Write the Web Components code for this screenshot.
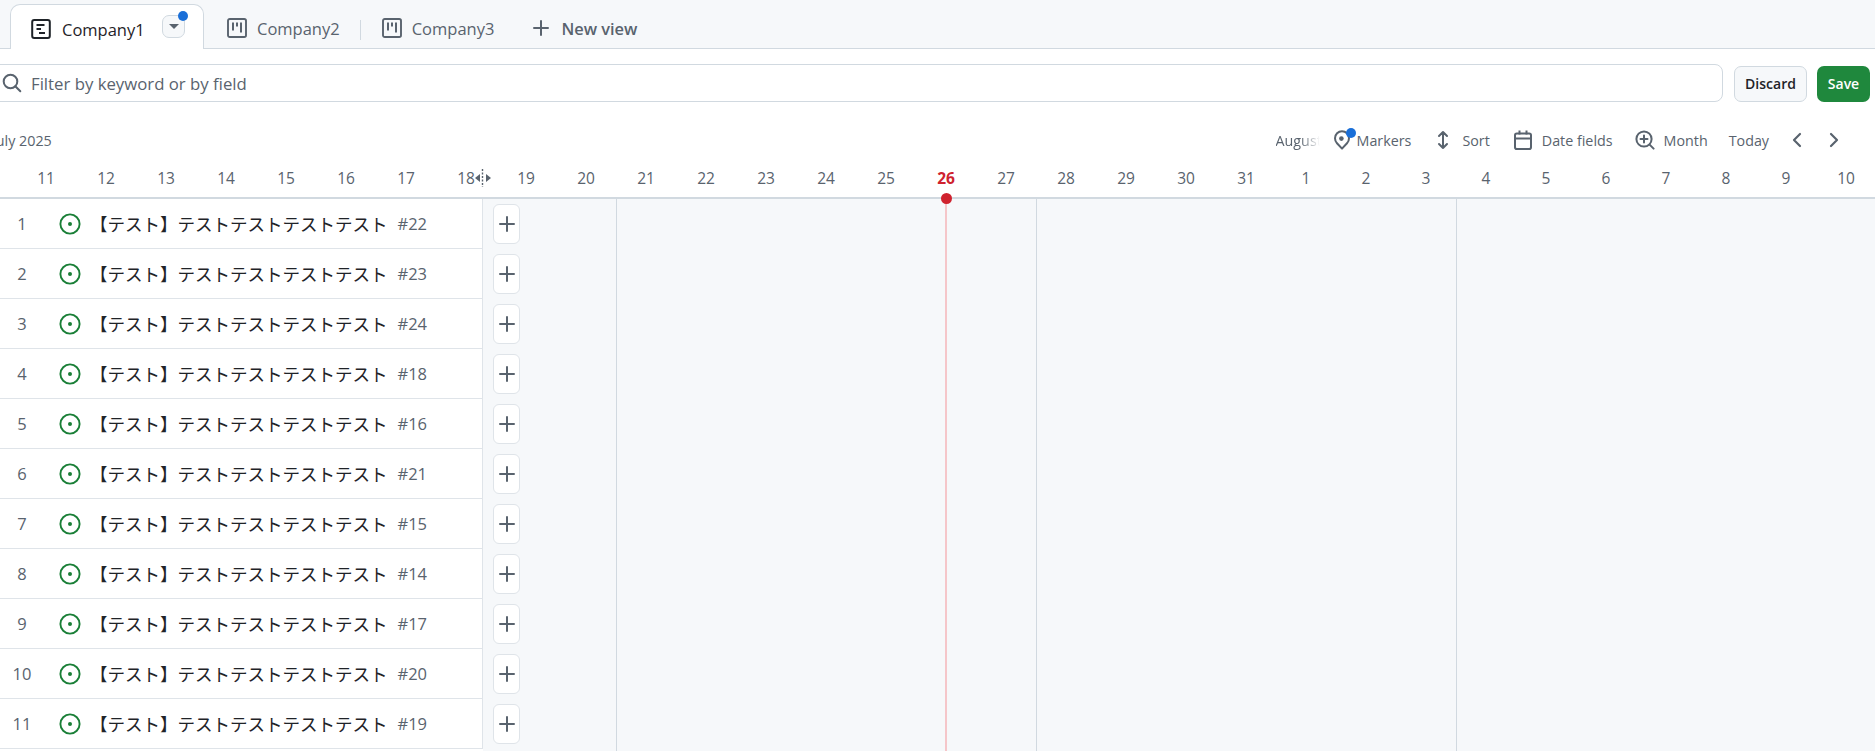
<!DOCTYPE html>
<html>
<head>
<meta charset="utf-8">
<style>
  html, body { margin: 0; height: 751px; overflow: hidden; background: #fff; }
  body { font-family: "Open Sans", "Noto Sans CJK JP", sans-serif; color: #1f2328; }
</style>
</head>
<body>
<view-tabs>
  <view-tab active icon="table" dropdown>Company1</view-tab>
  <view-tab icon="board">Company2</view-tab>
  <tab-sep></tab-sep>
  <view-tab icon="board">Company3</view-tab>
  <new-view>New view</new-view>
</view-tabs>
<filter-bar></filter-bar>
<roadmap-toolbar></roadmap-toolbar>
<date-row></date-row>
<roadmap-body id="body"></roadmap-body>

<script>
const ICONS = {
  table: '<rect x="1.2" y="1" width="17.6" height="18" rx="2" fill="none" stroke="currentColor" stroke-width="2"/><path d="M5.5 6h8M5.5 10h4.5M8 14h6" stroke="currentColor" stroke-width="2" fill="none"/>',
  board: '<rect x="1" y="1" width="18" height="18" rx="1.8" fill="none" stroke="currentColor" stroke-width="1.9"/><path d="M6 4.5v8M10 4.5v4M14 4.5v10" stroke="currentColor" stroke-width="2" fill="none"/>',
  plus: '<path d="M10 3v14M3 10h14" stroke="currentColor" stroke-width="2" fill="none" stroke-linecap="round"/>',
  search: '<circle cx="8.5" cy="8.5" r="6.8" fill="none" stroke="currentColor" stroke-width="2"/><path d="M13.3 13.3l5 5" stroke="currentColor" stroke-width="2" stroke-linecap="round"/>',
  marker: '<path d="M10 18.6l-5-5.4a7 7 0 1 1 10 0z" fill="none" stroke="currentColor" stroke-width="2" stroke-linejoin="round"/><circle cx="9.4" cy="8.6" r="2.3" fill="currentColor"/>',
  sort: '<path d="M10 2v16M6 6l4-4 4 4M6 14l4 4 4-4" fill="none" stroke="currentColor" stroke-width="2" stroke-linecap="round" stroke-linejoin="round"/>',
  calendar: '<rect x="2" y="3.5" width="16" height="15.5" rx="1.8" fill="none" stroke="currentColor" stroke-width="2"/><path d="M2 8.5h16M6.5 0.5v4M13.5 0.5v4" stroke="currentColor" stroke-width="2" fill="none"/>',
  zoom: '<circle cx="9" cy="9" r="7.6" fill="none" stroke="currentColor" stroke-width="2"/><path d="M14.6 14.6l4 4M9 5.5v7M5.5 9h7" stroke="currentColor" stroke-width="2" stroke-linecap="round" fill="none"/>',
  left: '<path d="M13 4l-6 6 6 6" fill="none" stroke="currentColor" stroke-width="2.2" stroke-linecap="round" stroke-linejoin="round"/>',
  right: '<path d="M7 4l6 6-6 6" fill="none" stroke="currentColor" stroke-width="2.2" stroke-linecap="round" stroke-linejoin="round"/>'
};
const svg = (name, size = 20) =>
  `<svg width="${size}" height="${size}" viewBox="0 0 20 20" style="display:block;flex:none">${ICONS[name]}</svg>`;

class ViewTabs extends HTMLElement {
  constructor() {
    super();
    this.attachShadow({ mode: 'open' }).innerHTML = `
      <style>
        :host {
          display: flex;
          align-items: flex-end;
          height: 48px;
          padding-left: 10px;
          background: #f6f8fa;
          border-bottom: 1px solid #d1d9e0;
        }
      </style>
      <slot></slot>`;
  }
}

class ViewTab extends HTMLElement {
  constructor() {
    super();
    this.attachShadow({ mode: 'open' });
  }
  connectedCallback() {
    const active = this.hasAttribute('active');
    this.shadowRoot.innerHTML = `
      <style>
        :host {
          display: flex;
          align-items: center;
          box-sizing: border-box;
          height: ${active ? 45 : 44}px;
          margin-bottom: ${active ? -1 : 0}px;
          padding: ${active ? '4px 0 0 20px' : '4px 20px 0 23px'};
          color: ${active ? '#1f2328' : '#59636e'};
          font-size: 16.5px;
          background: ${active ? '#fff' : 'transparent'};
          ${active ? 'border: 1px solid #d1d9e0; border-bottom: 0; border-radius: 10px 10px 0 0; width: 194px;' : ''}
        }
        .label { margin-left: ${active ? 11 : 10}px; }
        .drop {
          position: relative;
          box-sizing: border-box;
          width: 23px; height: 23px;
          margin: 0 0 6px 17px;
          border: 1px solid #d1d9e0;
          border-radius: 7px;
          background: #f6f8fa;
        }
        .drop::before {
          content: "";
          position: absolute;
          left: 6px; top: 8px;
          border: 5px solid transparent;
          border-top: 5px solid #59636e;
          border-bottom: 0;
        }
        .dot {
          position: absolute;
          right: -4px; top: -5px;
          width: 10px; height: 10px;
          border-radius: 50%;
          background: #1a6fd8;
        }
      </style>
      ${svg(this.getAttribute('icon'))}
      <span class="label"><slot></slot></span>
      ${this.hasAttribute('dropdown') ? '<span class="drop"><span class="dot"></span></span>' : ''}`;
  }
}

class TabSep extends HTMLElement {
  constructor() {
    super();
    this.attachShadow({ mode: 'open' }).innerHTML = `
      <style>
        :host {
          display: block;
          width: 1px;
          height: 20px;
          margin: 0 -2px 8px 0;
          background: #d1d9e0;
        }
      </style>`;
  }
}

class NewView extends HTMLElement {
  constructor() {
    super();
    this.attachShadow({ mode: 'open' }).innerHTML = `
      <style>
        :host {
          display: flex;
          align-items: center;
          gap: 10px;
          box-sizing: border-box;
          height: 44px;
          padding-top: 4px;
          margin-left: 17px;
          color: #59636e;
          font-size: 16.4px;
          font-weight: 600;
        }
      </style>
      ${svg('plus')}<span><slot></slot></span>`;
  }
}

class FilterBar extends HTMLElement {
  constructor() {
    super();
    this.attachShadow({ mode: 'open' }).innerHTML = `
      <style>
        :host {
          display: flex;
          align-items: center;
          height: 38px;
          margin: 15px 5px 0 -10px;
          font-size: 16.75px;
        }
        .input {
          flex: 1;
          box-sizing: border-box;
          height: 38px;
          display: flex;
          align-items: center;
          gap: 9px;
          padding-left: 11px;
          color: #59636e;
          border: 1px solid #d1d9e0;
          border-radius: 8px;
        }
        .input span { padding-top: 1px; }
        button {
          font: inherit;
          font-size: 14px;
          font-weight: 600;
          height: 36px;
          border-radius: 7px;
          padding: 0;
          margin-top: 1px;
        }
        .discard {
          width: 73px;
          margin-left: 11px;
          color: #1f2328;
          background: #f6f8fa;
          border: 1px solid #d1d9e0;
        }
        .save {
          width: 53px;
          margin-left: 10px;
          color: #fff;
          background: #1f883d;
          border: 0;
        }
      </style>
      <div class="input">${svg('search')}<span>Filter by keyword or by field</span></div>
      <button class="discard">Discard</button>
      <button class="save">Save</button>`;
  }
}

class RoadmapToolbar extends HTMLElement {
  constructor() {
    super();
    this.attachShadow({ mode: 'open' }).innerHTML = `
      <style>
        :host {
          display: flex;
          align-items: center;
          height: 28px;
          margin: 24px 0 0 -8px;
          color: #59636e;
          font-size: 14.3px;
        }
        .month { flex: 1; }
        .aug {
          width: 44px;
          overflow: hidden;
          white-space: nowrap;
          -webkit-mask-image: linear-gradient(to right, #000 55%, transparent);
          mask-image: linear-gradient(to right, #000 55%, transparent);
        }
        .tool { display: flex; align-items: center; gap: 9px; }
        .markers { position: relative; margin-left: 12px; gap: 5px; }
        .dot {
          position: absolute;
          left: 14px; top: -2px;
          width: 10px; height: 10px;
          border-radius: 50%;
          background: #1a6fd8;
        }
        .sort, .zoom { margin-left: 22px; }
        .date { margin-left: 23px; }
        .today { margin-left: 21px; }
        .prev { margin-left: 18px; }
        .next { margin-left: 17px; margin-right: 31px; }
      </style>
      <span class="month">July 2025</span>
      <span class="aug">August</span>
      <span class="tool markers">${svg('marker')}<span class="dot"></span>Markers</span>
      <span class="tool sort">${svg('sort')}Sort</span>
      <span class="tool date">${svg('calendar')}Date fields</span>
      <span class="tool zoom">${svg('zoom')}Month</span>
      <span class="today">Today</span>
      <span class="prev">${svg('left')}</span>
      <span class="next">${svg('right')}</span>`;
  }
}

class DateRow extends HTMLElement {
  constructor() {
    super();
    const days = [];
    for (let d = 11; d <= 31; d++) days.push(d);
    for (let d = 1; d <= 10; d++) days.push(d);
    this.attachShadow({ mode: 'open' }).innerHTML = `
      <style>
        :host {
          display: flex;
          position: relative;
          box-sizing: border-box;
          height: 33px;
          margin-top: 12px;
          padding-left: 16px;
          color: #59636e;
          font-size: 15.5px;
          line-height: 24px;
          border-bottom: 2px solid #d1d9e0;
        }
        span { flex: 0 0 60px; text-align: center; }
        .today { color: #cf222e; font-weight: 700; }
        svg { position: absolute; left: 474px; top: 3px; }
      </style>
      ${days.map((d, i) => `<span class="${i === 15 ? 'today' : ''}">${d}</span>`).join('')}
      <svg width="18" height="18" viewBox="0 0 18 18">
        <path d="M8.5 0v18" stroke="#59636e" stroke-width="1.4" stroke-dasharray="2 1.5"/>
        <path d="M1 9l5-4v8zM17 9l-5-4v8z" fill="#59636e"/>
      </svg>`;
  }
}

class IssueRow extends HTMLElement {
  constructor() {
    super();
    this.attachShadow({ mode: 'open' });
  }
  connectedCallback() {
    this.shadowRoot.innerHTML = `
      <style>
        :host {
          display: grid;
          grid-template-columns: 483px 1fr;
          height: 50px;
          font-size: 17.5px;
        }
        .left {
          display: flex;
          align-items: center;
          box-sizing: border-box;
          background: #fff;
          border-right: 1px solid #dfe4e9;
          border-bottom: 1px solid #dfe4e9;
        }
        .num { flex: 0 0 44px; text-align: center; color: #59636e; font-size: 16.5px; }
        svg.state { margin-left: 15px; flex: none; }
        .title { margin-left: 9px; white-space: nowrap; color: #1f2328; font-family: "Noto Sans CJK JP", sans-serif; }
        .id { margin-left: 10px; color: #59636e; font-size: 16.5px; }
        .add {
          display: flex;
          align-items: center;
          justify-content: center;
          box-sizing: border-box;
          width: 27px;
          height: 40px;
          margin: 5px 0 0 10px;
          color: #59636e;
          background: #fff;
          border: 1px solid #dfe4e9;
          border-radius: 6px;
        }
      </style>
      <div class="left">
        <span class="num">${this.getAttribute('num')}</span>
        <svg class="state" width="22" height="22" viewBox="0 0 22 22">
          <circle cx="11" cy="11" r="9.6" fill="none" stroke="#1a7f37" stroke-width="1.9"/>
          <circle cx="11" cy="11" r="2" fill="#1a7f37"/>
        </svg>
        <span class="title"><slot></slot></span>
        <span class="id">#${this.getAttribute('issue')}</span>
      </div>
      <div><div class="add">${svg('plus')}</div></div>`;
  }
}

class RoadmapBody extends HTMLElement {
  constructor() {
    super();
    this.attachShadow({ mode: 'open' }).innerHTML = `
      <style>
        :host {
          display: block;
          position: relative;
          height: 552px;
          background-color: #f6f8fa;
          background-image:
            linear-gradient(#fff, #fff),
            repeating-linear-gradient(to right, #d1d9e0 0 1px, transparent 1px 420px);
          background-size: 483px 100%, auto;
          background-position: 0 0, 616px 0;
          background-repeat: no-repeat, repeat;
        }
        .now {
          position: absolute;
          left: 945px; top: 0; bottom: 0;
          width: 2px;
          background: #f5c6c9;
        }
        .pin {
          position: absolute;
          left: 941px; top: -6px;
          width: 11px; height: 11px;
          border-radius: 50%;
          background: #cf222e;
        }
      </style>
      <slot></slot>
      <div class="now"></div>
      <div class="pin"></div>`;
  }
}

customElements.define('view-tabs', ViewTabs);
customElements.define('view-tab', ViewTab);
customElements.define('tab-sep', TabSep);
customElements.define('new-view', NewView);
customElements.define('filter-bar', FilterBar);
customElements.define('roadmap-toolbar', RoadmapToolbar);
customElements.define('date-row', DateRow);
customElements.define('issue-row', IssueRow);
customElements.define('roadmap-body', RoadmapBody);

const issues = [22, 23, 24, 18, 16, 21, 15, 14, 17, 20, 19];
const body = document.getElementById('body');
issues.forEach((id, i) => {
  const row = document.createElement('issue-row');
  row.setAttribute('num', i + 1);
  row.setAttribute('issue', id);
  row.textContent = '【テスト】テストテストテストテスト';
  body.appendChild(row);
});
</script>
</body>
</html>
